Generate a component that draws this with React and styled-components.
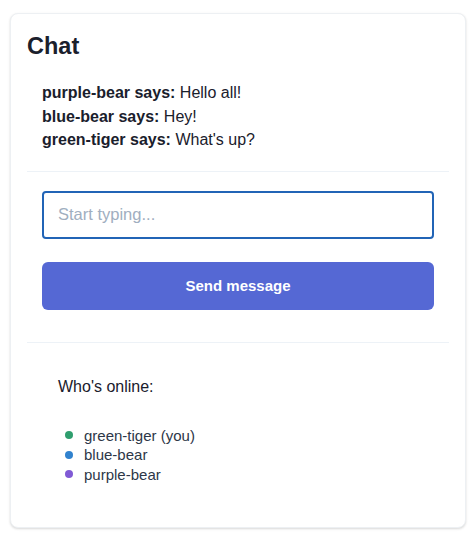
import styled, { createGlobalStyle } from 'styled-components';

const GlobalStyle = createGlobalStyle`
  * { box-sizing: border-box; }
  body {
    margin: 0;
    background: #ffffff;
    font-family: "Liberation Sans", Arial, sans-serif;
    color: #1a202c;
  }
`;

const Page = styled.div`
  padding: 13px 8px 10px 10px;
`;

const Card = styled.div`
  width: 456px;
  height: 515px;
  padding: 16px;
  border: 1px solid #edf0f3;
  border-radius: 8px;
  box-shadow: 0 1px 3px rgba(0, 0, 0, 0.1), 0 1px 2px rgba(0, 0, 0, 0.06);
  background: #fff;
`;

const Title = styled.h2`
  margin: 3px 0 0;
  font-size: 23.5px;
  line-height: 26px;
  font-weight: 700;
  color: #1a202c;
`;

const Messages = styled.div`
  padding: 22px 15px 19px;
  border-bottom: 1px solid #edf2f7;
  font-size: 16px;
  line-height: 23.5px;
`;

const Message = styled.div`
  color: #1a202c;
`;

const Author = styled.span`
  font-weight: 700;
`;

const Composer = styled.div`
  display: flex;
  flex-direction: column;
  gap: 23px;
  padding: 19px 15px 32px;
  border-bottom: 1px solid #edf2f7;
`;

const Input = styled.input`
  height: 48px;
  width: 100%;
  padding: 0 14px;
  border: 2px solid #2164b6;
  border-radius: 4px;
  font-family: inherit;
  font-size: 16.5px;
  color: #1a202c;
  outline: none;
  &::placeholder { color: #a0aec0; }
`;

const SendButton = styled.button`
  height: 48px;
  width: 100%;
  border: none;
  border-radius: 6px;
  background: #5568d4;
  color: #fff;
  font-family: inherit;
  font-size: 15px;
  font-weight: 700;
  cursor: pointer;
`;

const Online = styled.div`
  padding: 32px 31px 0;
`;

const OnlineTitle = styled.div`
  font-size: 16px;
  line-height: 24px;
  color: #1a202c;
`;

const UserList = styled.ul`
  list-style: none;
  margin: 27px 0 0;
  padding: 0 0 0 7px;
`;

const User = styled.li`
  display: flex;
  align-items: center;
  gap: 11px;
  font-size: 15px;
  line-height: 19.5px;
  color: #2d3748;
`;

const Dot = styled.span`
  width: 8px;
  height: 8px;
  border-radius: 50%;
  background: ${p => p.color};
`;

const messages = [
  { author: 'purple-bear', text: 'Hello all!' },
  { author: 'blue-bear', text: 'Hey!' },
  { author: 'green-tiger', text: "What's up?" },
];

const users = [
  { name: 'green-tiger (you)', color: '#2f9e6e' },
  { name: 'blue-bear', color: '#3182ce' },
  { name: 'purple-bear', color: '#805ad5' },
];

export default function App() {
  return (
    <Page>
      <GlobalStyle />
      <Card>
        <Title>Chat</Title>
        <Messages>
          {messages.map(m => (
            <Message key={m.author}>
              <Author>{m.author} says:</Author> {m.text}
            </Message>
          ))}
        </Messages>
        <Composer>
          <Input placeholder="Start typing..." />
          <SendButton>Send message</SendButton>
        </Composer>
        <Online>
          <OnlineTitle>Who's online:</OnlineTitle>
          <UserList>
            {users.map(u => (
              <User key={u.name}>
                <Dot color={u.color} />
                {u.name}
              </User>
            ))}
          </UserList>
        </Online>
      </Card>
    </Page>
  );
}
